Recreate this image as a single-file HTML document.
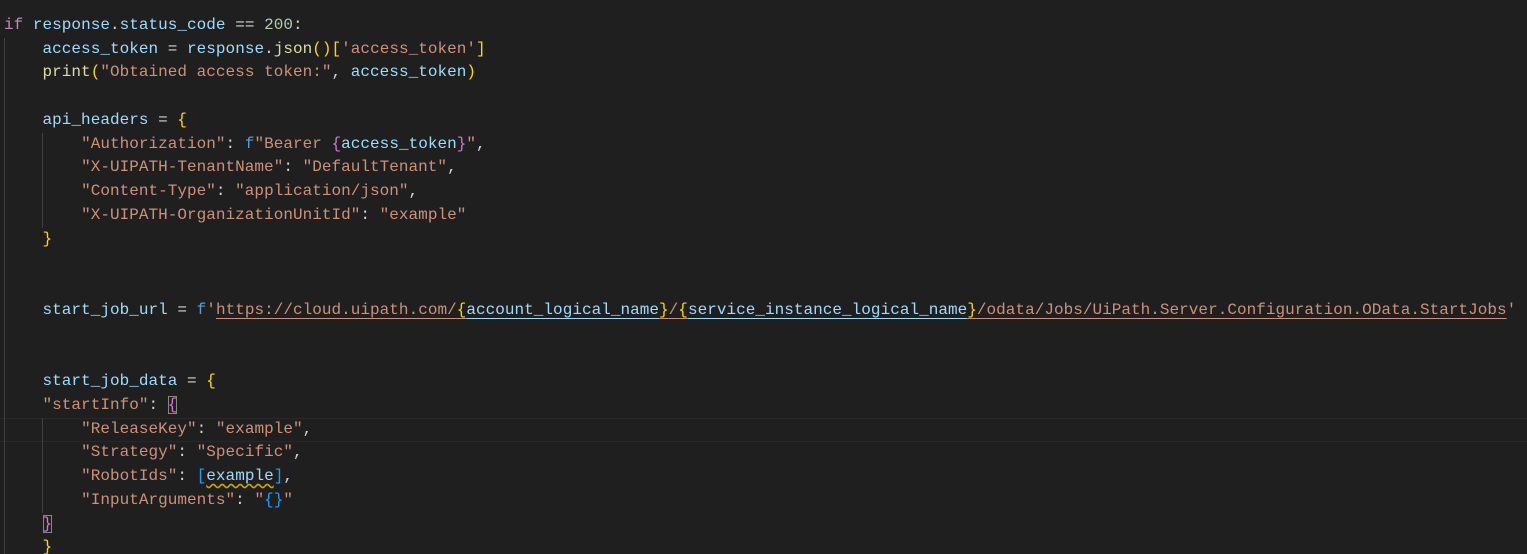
<!DOCTYPE html>
<html><head><meta charset="utf-8"><style>
html,body{margin:0;padding:0;background:#1f1f1f;width:1527px;height:554px;overflow:hidden}
.ed{position:relative;top:2px;width:1527px;height:554px;font-family:"Liberation Mono",monospace;font-size:16px;letter-spacing:0.03px;color:#d4d4d4}
.l{position:absolute;left:4px;height:23.75px;line-height:23.75px;white-space:pre}
.k{color:#c586c0}.v{color:#9cdcfe}.n{color:#b5cea8}.s{color:#ce9178}.f{color:#dcdcaa}.b{color:#569cd6}
.y{color:#ffd700}.p{color:#da70d6}.c{color:#179fff}
.u{text-decoration:underline;text-decoration-color:#ce9178;text-underline-offset:4px}
.uv{text-decoration:underline;text-decoration-color:#9cdcfe;text-underline-offset:4px}
.g{position:absolute;width:1px;background:#404040}
.cur{position:absolute;left:0;right:0;top:416px;height:22px;border-top:1px solid #282828;border-bottom:1px solid #282828}
.box{outline:1px solid #888;outline-offset:-1px}
.sq{text-decoration:underline wavy #cca700;text-underline-offset:3px}
</style></head><body><div class="ed">
<div class="cur"></div>
<div class="g" style="left:4px;top:36px;height:520px"></div>
<div class="g" style="left:42px;top:131px;height:95px"></div>
<div class="g" style="left:42px;top:416px;height:95px"></div>
<div class="l" style="top:12px"><span class="k">if</span> <span class="v">response</span>.<span class="v">status_code</span> == <span class="n">200</span>:</div>
<div class="l" style="top:36px">    <span class="v">access_token</span> = <span class="v">response</span>.<span class="f">json</span><span class="y">()</span><span class="y">[</span><span class="s">'access_token'</span><span class="y">]</span></div>
<div class="l" style="top:59px">    <span class="f">print</span><span class="y">(</span><span class="s">"Obtained access token:"</span>, <span class="v">access_token</span><span class="y">)</span></div>
<div class="l" style="top:107px">    <span class="v">api_headers</span> = <span class="y">{</span></div>
<div class="l" style="top:131px">        <span class="s">"Authorization"</span>: <span class="b">f</span><span class="s">"Bearer </span><span class="p">{</span><span class="v">access_token</span><span class="p">}</span><span class="s">"</span>,</div>
<div class="l" style="top:154px">        <span class="s">"X-UIPATH-TenantName"</span>: <span class="s">"DefaultTenant"</span>,</div>
<div class="l" style="top:178px">        <span class="s">"Content-Type"</span>: <span class="s">"application/json"</span>,</div>
<div class="l" style="top:202px">        <span class="s">"X-UIPATH-OrganizationUnitId"</span>: <span class="s">"example"</span></div>
<div class="l" style="top:226px">    <span class="y">}</span></div>
<div class="l" style="top:297px">    <span class="v">start_job_url</span> = <span class="b">f</span><span class="s">'</span><span class="s u">https://cloud.uipath.com/</span><span class="y u">{</span><span class="v uv">account_logical_name</span><span class="y u">}</span><span class="s u">/</span><span class="y u">{</span><span class="v uv">service_instance_logical_name</span><span class="y u">}</span><span class="s u">/odata/Jobs/UiPath.Server.Configuration.OData.StartJobs</span><span class="s">'</span></div>
<div class="l" style="top:368px">    <span class="v">start_job_data</span> = <span class="y">{</span></div>
<div class="l" style="top:392px">    <span class="s">"startInfo"</span>: <span class="p box">{</span></div>
<div class="l" style="top:416px">        <span class="s">"ReleaseKey"</span>: <span class="s">"example"</span>,</div>
<div class="l" style="top:439px">        <span class="s">"Strategy"</span>: <span class="s">"Specific"</span>,</div>
<div class="l" style="top:463px">        <span class="s">"RobotIds"</span>: <span class="c">[</span><span class="v sq">example</span><span class="c">]</span>,</div>
<div class="l" style="top:487px">        <span class="s">"InputArguments"</span>: <span class="s">"</span><span class="c">{}</span><span class="s">"</span></div>
<div class="l" style="top:511px">    <span class="p box">}</span></div>
<div class="l" style="top:534px">    <span class="y">}</span></div>
</div></body></html>
